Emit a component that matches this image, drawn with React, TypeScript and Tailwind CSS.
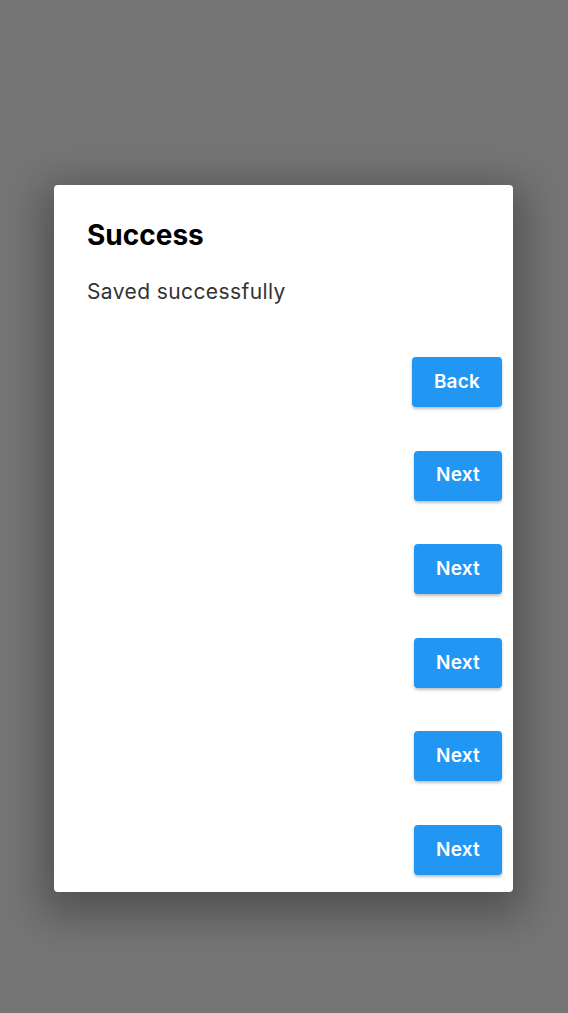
const BUTTONS = ['Back', 'Next', 'Next', 'Next', 'Next', 'Next'];

export default function App() {
  return (
    <div
      className="min-h-[1013px] w-full bg-[#757575] pt-[185px] pl-[54px]"
      style={{ fontFamily: 'Inter, "Noto Sans", sans-serif' }}
    >
      <div className="w-[459px] h-[707px] bg-white rounded-[4px] shadow-[0_12px_40px_12px_rgba(0,0,0,0.3)] flex flex-col">
        <div className="pt-[34px] px-[33px]">
          <h2 className="text-[28px] leading-[32px] font-bold text-black">Success</h2>
          <p className="mt-[27px] text-[21px] leading-[28px] text-[#333333] tracking-[0.4px]">Saved successfully</p>
        </div>
        <div className="mt-[51px] pr-[11px] flex flex-col items-end gap-[43.6px]">
          {BUTTONS.map((label, i) => (
            <button
              key={i}
              className="h-[50px] px-[22px] rounded-[4px] bg-[#2196f3] text-white text-[19px] font-semibold tracking-[0.2px] shadow-[0_2px_3px_rgba(0,0,0,0.25)]"
            >
              {label}
            </button>
          ))}
        </div>
      </div>
    </div>
  );
}
